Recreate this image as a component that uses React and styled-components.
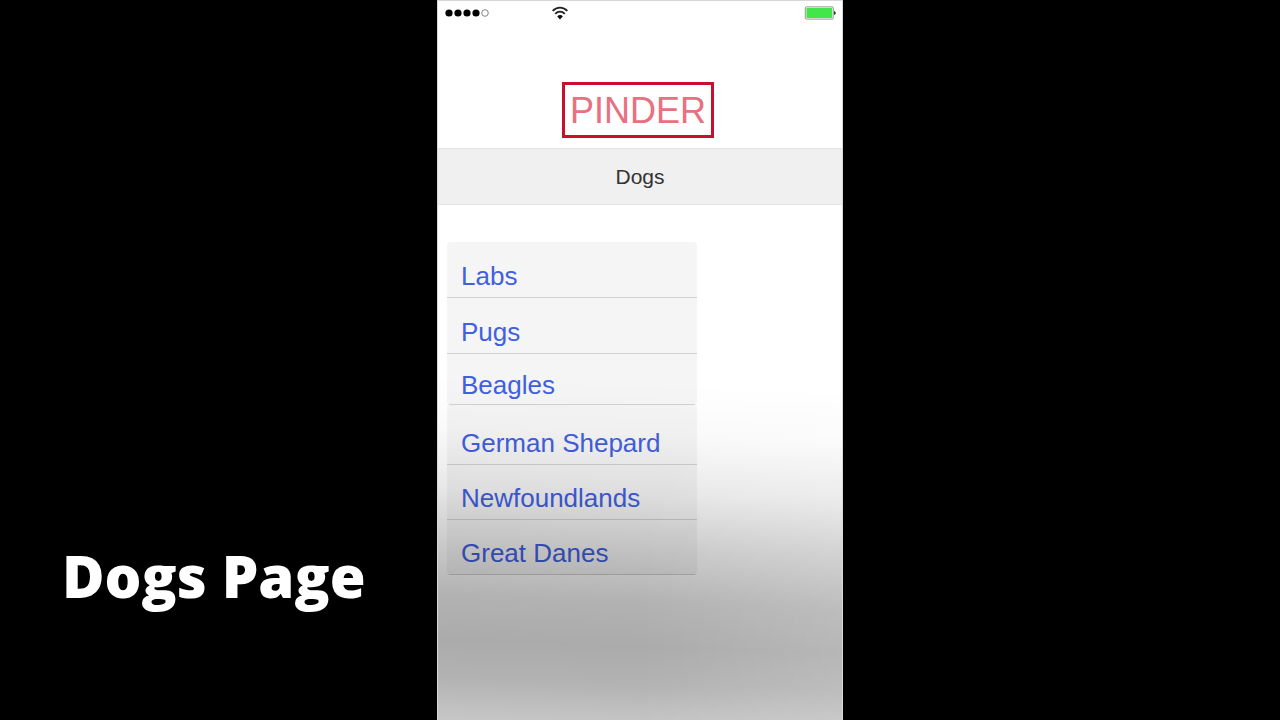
import React from "react";
import styled, { createGlobalStyle } from "styled-components";

const GlobalStyle = createGlobalStyle`
  * {
    box-sizing: border-box;
  }
  body {
    margin: 0;
    background-color: #000;
    font-family: "Liberation Sans", Arial, sans-serif;
  }
`;

const StyledPage = styled.div`
  display: grid;
  grid-template-columns: minmax(0, 1fr) minmax(0, 406px) minmax(0, 1fr);
  min-height: 100vh;
  background-color: #000;
`;

const StyledCaption = styled.h2`
  align-self: end;
  margin: 0;
  padding: 0 0 104px 62px;
  color: #fff;
  font-family: "Open Sans", sans-serif;
  font-size: 58px;
  font-weight: 800;
  line-height: 80px;
  white-space: nowrap;
`;

const StyledPhone = styled.main`
  position: relative;
  display: flex;
  flex-direction: column;
  border: 1px solid #d8d8d8;
  border-bottom: 0;
  background-color: #fff;

  /* shade that falls over the lower half of the screen */
  &::after {
    content: "";
    position: absolute;
    inset: 0;
    pointer-events: none;
    background: linear-gradient(
      182deg,
      rgba(0, 0, 0, 0) 53%,
      rgba(0, 0, 0, 0.02) 60%,
      rgba(0, 0, 0, 0.09) 68%,
      rgba(0, 0, 0, 0.21) 76%,
      rgba(0, 0, 0, 0.3) 83%,
      rgba(0, 0, 0, 0.33) 89%,
      rgba(0, 0, 0, 0.3) 94%,
      rgba(0, 0, 0, 0.22) 100%
    );
    mask-image: linear-gradient(to right, #000 50%, rgba(0, 0, 0, 0.86) 100%);
  }
`;

const StyledStatusBar = styled.div`
  display: flex;
  align-items: center;
  gap: 62px;
  height: 24px;
  padding: 0 6px;

  svg {
    display: block;
    flex-shrink: 0;
  }
  svg:last-child {
    margin-left: auto;
  }
`;

const StyledHeader = styled.header`
  display: flex;
  justify-content: center;
  padding: 57px 4px 10px 0;
`;

const StyledLogo = styled.h1`
  margin: 0;
  padding: 2px 5px 0;
  border: 3px solid #c8102e;
  color: #e8707f;
  font-size: 36px;
  font-weight: 400;
  line-height: 48px;
`;

const StyledTitleBar = styled.div`
  border: 1px solid #e4e4e4;
  border-width: 1px 0;
  background-color: #f0f0f0;
  color: #333;
  font-size: 21px;
  line-height: 55px;
  text-align: center;
`;

const StyledBreeds = styled.nav`
  width: 100%;
  padding: 37px 9px 0;
`;

const StyledList = styled.ul`
  max-width: 250px;
  margin: 0;
  padding: 0;
  overflow: hidden;
  border-radius: 4px;
  background-color: #f5f5f5;
  list-style: none;

  & + & {
    padding-top: 5px;
  }
`;

const StyledItem = styled.li`
  display: flex;
  align-items: center;
  height: ${({ $height }) => $height}px;
  padding: 12px 14px 0;
  border-bottom: 1px solid #d2d2d2;
`;

const StyledLink = styled.a`
  color: #4160e0;
  font-size: 26px;
  line-height: 32px;
  text-decoration: none;
  white-space: nowrap;
`;

const groups = [
  [
    { name: "Labs", height: 56 },
    { name: "Pugs", height: 56 },
    { name: "Beagles", height: 51 }
  ],
  [
    { name: "German Shepard", height: 55 },
    { name: "Newfoundlands", height: 55 },
    { name: "Great Danes", height: 55 }
  ]
];

const SignalIcon = () => (
  <svg width="46" height="10" viewBox="0 0 46 10" aria-hidden="true">
    {[5, 14, 23, 32].map(cx => (
      <circle key={cx} cx={cx} cy="5" r="3.6" fill="#000" />
    ))}
    <circle cx="41" cy="5" r="3.3" fill="#fff" stroke="#777" strokeWidth="0.9" />
  </svg>
);

const WifiIcon = () => (
  <svg width="16" height="14" viewBox="0 0 16 14" fill="none" aria-hidden="true">
    <path d="M0.7 4.9C4.8 0.5 11.2 0.5 15.3 4.9" stroke="#222" strokeWidth="1.9" />
    <path d="M3.2 7.8C6 4.9 10 4.9 12.8 7.8" stroke="#222" strokeWidth="1.9" />
    <path d="M5.2 10.4C6.8 8.5 9.2 8.5 10.8 10.4L8 13.5Z" fill="#111" />
  </svg>
);

const BatteryIcon = () => (
  <svg width="32" height="14" viewBox="0 0 32 14" aria-hidden="true">
    <rect x="1.3" y="0.9" width="28" height="12.2" rx="1.2" fill="#fff" stroke="#8a9a8a" />
    <rect x="2.4" y="2" width="25.8" height="10" rx="0.5" fill="#43e649" />
    <path d="M30 5Q31.8 5.4 31.8 7Q31.8 8.6 30 9Z" fill="#333" />
  </svg>
);

const App = () => (
  <>
    <GlobalStyle />
    <StyledPage>
      <StyledCaption>Dogs Page</StyledCaption>
      <StyledPhone>
        <StyledStatusBar>
          <SignalIcon />
          <WifiIcon />
          <BatteryIcon />
        </StyledStatusBar>
        <StyledHeader>
          <StyledLogo>PINDER</StyledLogo>
        </StyledHeader>
        <StyledTitleBar>Dogs</StyledTitleBar>
        <StyledBreeds aria-label="Dogs">
          {groups.map(group => (
            <StyledList key={group[0].name}>
              {group.map(({ name, height }) => (
                <StyledItem key={name} $height={height}>
                  <StyledLink href="#">{name}</StyledLink>
                </StyledItem>
              ))}
            </StyledList>
          ))}
        </StyledBreeds>
      </StyledPhone>
    </StyledPage>
  </>
);

export default App;
